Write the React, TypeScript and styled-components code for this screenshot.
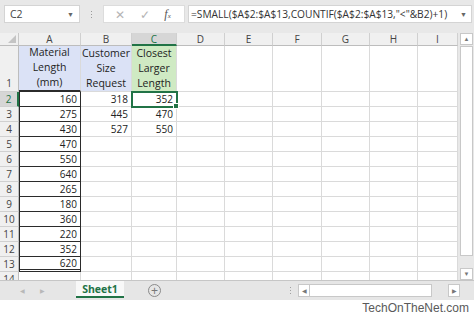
import React from 'react'
import styled, { createGlobalStyle, css } from 'styled-components'

const GlobalStyle = createGlobalStyle`
  html, body {
    margin: 0;
    padding: 0;
    background: #ffffff;
  }
  body {
    font-family: "Open Sans", "Liberation Sans", sans-serif;
  }
`

const GREEN = '#217346'
const GRID = '#dadada'
const INK = '#222'

const Page = styled.div`
  width: 474px;
  height: 320px;
  display: flex;
  flex-direction: column;
  overflow: hidden;
`

const TopBar = styled.div`
  height: 33px;
  box-sizing: border-box;
  background: #e8e8e8;
  display: flex;
  align-items: flex-start;
  padding: 5px 2px 0 4px;
`

const NameBox = styled.div`
  width: 76px;
  height: 18px;
  box-sizing: border-box;
  background: #fff;
  border: 1px solid #d4d4d4;
  display: flex;
  align-items: center;
  justify-content: space-between;
  padding: 0 5px 0 5px;
  font-size: 10.5px;
  color: #444;
`

const Caret = styled.span`
  font-size: 7px;
  color: #666;
`

const Grip = styled.div`
  width: 23px;
  height: 18px;
  display: flex;
  flex-direction: column;
  align-items: center;
  justify-content: center;
  gap: 2px;

  span {
    width: 1px;
    height: 1px;
    background: #9a9a9a;
  }
`

const FxBox = styled.div`
  width: 82px;
  height: 18px;
  box-sizing: border-box;
  background: #fff;
  border: 1px solid #dcdcdc;
  display: flex;
  align-items: center;
  justify-content: space-around;
  padding: 0 6px 0 4px;
  color: #b4b4b4;
  font-size: 12px;
`

const Fx = styled.span`
  font-family: "Liberation Serif", serif;
  font-style: italic;
  color: #555;
  font-size: 12px;

  sub {
    font-size: 7px;
    vertical-align: baseline;
  }
`

const FormulaInput = styled.div`
  flex: 1;
  margin-left: 3px;
  height: 18px;
  box-sizing: border-box;
  background: #fff;
  border: 1px solid #d4d4d4;
  display: flex;
  align-items: center;
  justify-content: space-between;
  padding: 0 4px 0 2px;
  font-size: 10.2px;
  color: #333;
  white-space: nowrap;
`

const Main = styled.div`
  height: 247px;
  display: flex;
  background: #e8e8e8;
`

const Sheet = styled.div`
  width: 458px;
  display: grid;
  grid-template-columns: 19px 62px 51px 45px 48px 48px 49px 48px 48px 40px;
  grid-template-rows: 13px 46px repeat(12, 15px) 15px;
  overflow: hidden;
  background: #fff;
  font-size: 10px;
  color: ${INK};
`

const Corner = styled.div`
  background: #f0f0f0;
  border-right: 1px solid #c8c8c8;
  border-bottom: 1px solid #bdbdbd;
  position: relative;

  &::after {
    content: '';
    position: absolute;
    right: 2px;
    bottom: 2px;
    border-left: 8px solid transparent;
    border-bottom: 8px solid #c4c4c4;
  }
`

const ColHead = styled.div<{ $active?: boolean }>`
  background: ${(p) => (p.$active ? '#d6d6d6' : '#f0f0f0')};
  color: ${(p) => (p.$active ? GREEN : '#444')};
  border-right: 1px solid #d0d0d0;
  border-bottom: ${(p) => (p.$active ? `2px solid ${GREEN}` : '1px solid #bdbdbd')};
  box-sizing: border-box;
  display: flex;
  align-items: center;
  justify-content: center;
  font-size: 10px;
  line-height: 1;
`

const RowHead = styled.div<{ $active?: boolean; $tall?: boolean }>`
  background: ${(p) => (p.$active ? '#d6d6d6' : '#f0f0f0')};
  color: ${(p) => (p.$active ? GREEN : '#444')};
  border-bottom: 1px solid #d0d0d0;
  border-right: ${(p) => (p.$active ? `2px solid ${GREEN}` : '1px solid #bdbdbd')};
  box-sizing: border-box;
  display: flex;
  align-items: ${(p) => (p.$tall ? 'flex-end' : 'center')};
  justify-content: center;
  padding-bottom: ${(p) => (p.$tall ? '1px' : '0')};
  font-size: 10px;
  line-height: 13px;
`

type CellKind = 'plain' | 'blue' | 'green'

const Cell = styled.div<{
  $kind?: CellKind
  $boxed?: boolean
  $last?: boolean
  $darkBottom?: boolean
  $selected?: boolean
}>`
  position: relative;
  box-sizing: border-box;
  border-right: 1px solid ${GRID};
  border-bottom: 1px solid ${GRID};
  background: ${(p) =>
    p.$kind === 'blue' ? '#dbe2f6' : p.$kind === 'green' ? '#cfeac3' : '#fff'};
  display: flex;
  align-items: center;
  justify-content: flex-end;
  padding: 0 ${(p) => (p.$kind && p.$kind !== 'plain' ? '0' : '3px')};
  line-height: 14px;

  ${(p) =>
    p.$boxed &&
    css`
      border-left: 1px solid #2b2b2b;
      border-right: 1px solid #2b2b2b;
      border-bottom: 1px solid #2b2b2b;
    `}
  ${(p) =>
    p.$last &&
    css`
      border-bottom: 3px double #2b2b2b;
    `}
  ${(p) =>
    p.$darkBottom &&
    css`
      border-bottom: 2px solid #2b2b2b;
    `}
  ${(p) =>
    p.$selected &&
    css`
      outline: 2px solid ${GREEN};
      outline-offset: -1px;
      z-index: 2;
    `}
`

const HeaderText = styled.div`
  width: 100%;
  align-self: flex-end;
  text-align: center;
  line-height: 15px;
  font-size: 10.5px;
  white-space: nowrap;
`

const Handle = styled.span`
  position: absolute;
  right: -3px;
  bottom: -3px;
  width: 4px;
  height: 4px;
  background: ${GREEN};
  border: 1px solid #fff;
  z-index: 3;
`

const VScroll = styled.div`
  width: 13px;
  margin-left: 2px;
  display: flex;
  flex-direction: column;
  background: #e8e8e8;
`

const ScrollBtn = styled.div`
  height: 12px;
  box-sizing: border-box;
  background: #fff;
  border: 1px solid #c8c8c8;
  display: flex;
  align-items: center;
  justify-content: center;
  font-size: 6px;
  color: #777;
`

const VThumb = styled.div`
  flex: 1;
  margin: 1px 0 12px;
  background: #fff;
  border: 1px solid #c8c8c8;
`

const TabBar = styled.div`
  height: 20px;
  box-sizing: border-box;
  background: #e6e6e6;
  border-top: 1px solid #c6c6c6;
  display: flex;
  align-items: stretch;
`

const NavArrows = styled.div`
  width: 76px;
  display: flex;
  align-items: center;
  gap: 15px;
  padding-left: 20px;
  box-sizing: border-box;
  font-size: 6px;
  color: #b8b8b8;
`

const SheetTab = styled.div`
  width: 48px;
  box-sizing: border-box;
  background: #f8f8f8;
  border-bottom: 2px solid ${GREEN};
  margin-bottom: 2px;
  display: flex;
  align-items: center;
  justify-content: center;
  font-weight: 700;
  font-size: 10.5px;
  color: ${GREEN};
`

const AddSheet = styled.div`
  margin-left: 24px;
  align-self: center;
  width: 13px;
  height: 13px;
  box-sizing: border-box;
  border: 1px solid #8a8a8a;
  border-radius: 50%;
  display: flex;
  align-items: center;
  justify-content: center;
  color: #777;
  font-size: 12px;
  line-height: 1;
  font-family: "Liberation Sans", sans-serif;
`

const HScrollArea = styled.div`
  margin-left: auto;
  width: 192px;
  display: flex;
  align-items: center;
  padding-right: 14px;
  box-sizing: border-box;
`

const HGrip = styled.div`
  width: 16px;
  display: flex;
  flex-direction: column;
  align-items: center;
  gap: 2px;

  span {
    width: 1px;
    height: 1px;
    background: #a0a0a0;
  }
`

const HBtn = styled(ScrollBtn)`
  width: 12px;
  height: 13px;
`

const HThumb = styled.div`
  width: 122px;
  height: 13px;
  box-sizing: border-box;
  background: #fff;
  border: 1px solid #c8c8c8;
  border-left: none;
  margin-right: auto;
`

const Footer = styled.div`
  flex: 1;
  background: #fff;
  display: flex;
  justify-content: flex-end;
  padding: 1px 5px 0 0;
  font-family: "Liberation Sans", Arial, sans-serif;
  font-size: 12px;
  color: #5a5a5a;
`

const letters = ['A', 'B', 'C', 'D', 'E', 'F', 'G', 'H', 'I']
const colA = [160, 275, 430, 470, 550, 640, 265, 180, 360, 220, 352, 620]
const colB = [318, 445, 527]
const colC = [352, 470, 550]

export default function App() {
  const rows = []
  for (let i = 0; i < 13; i++) {
    const rowNum = i + 2
    const isData = i < 12
    rows.push(
      <React.Fragment key={rowNum}>
        <RowHead $active={rowNum === 2}>{rowNum}</RowHead>
        <Cell $boxed={isData} $last={i === 11}>
          {isData ? colA[i] : ''}
        </Cell>
        <Cell>{colB[i] ?? ''}</Cell>
        <Cell $selected={rowNum === 2}>
          {colC[i] ?? ''}
          {rowNum === 2 && <Handle />}
        </Cell>
        {letters.slice(3).map((l) => (
          <Cell key={l} />
        ))}
      </React.Fragment>
    )
  }

  return (
    <Page>
      <GlobalStyle />
      <TopBar>
        <NameBox>
          C2 <Caret>▼</Caret>
        </NameBox>
        <Grip>
          <span />
          <span />
          <span />
        </Grip>
        <FxBox>
          <span>✕</span>
          <span>✓</span>
          <Fx>
            f<sub>x</sub>
          </Fx>
        </FxBox>
        <FormulaInput>
          <span>=SMALL($A$2:$A$13,COUNTIF($A$2:$A$13,"&lt;"&amp;B2)+1)</span>
          <Caret>▼</Caret>
        </FormulaInput>
      </TopBar>

      <Main>
        <Sheet>
          <Corner />
          {letters.map((l) => (
            <ColHead key={l} $active={l === 'C'}>
              {l}
            </ColHead>
          ))}

          <RowHead $tall>1</RowHead>
          <Cell $kind="blue" $darkBottom>
            <HeaderText>
              Material
              <br />
              Length
              <br />
              (mm)
            </HeaderText>
          </Cell>
          <Cell $kind="blue">
            <HeaderText>
              Customer
              <br />
              Size
              <br />
              Request
            </HeaderText>
          </Cell>
          <Cell $kind="green">
            <HeaderText>
              Closest
              <br />
              Larger
              <br />
              Length
            </HeaderText>
          </Cell>
          {letters.slice(3).map((l) => (
            <Cell key={l} />
          ))}

          {rows}
        </Sheet>
        <VScroll>
          <ScrollBtn>▲</ScrollBtn>
          <VThumb />
          <ScrollBtn>▼</ScrollBtn>
        </VScroll>
      </Main>

      <TabBar>
        <NavArrows>
          <span>◀</span>
          <span>▶</span>
        </NavArrows>
        <SheetTab>Sheet1</SheetTab>
        <AddSheet>+</AddSheet>
        <HScrollArea>
          <HGrip>
            <span />
            <span />
            <span />
          </HGrip>
          <HBtn>◀</HBtn>
          <HThumb />
          <HBtn>▶</HBtn>
        </HScrollArea>
      </TabBar>

      <Footer>TechOnTheNet.com</Footer>
    </Page>
  )
}
